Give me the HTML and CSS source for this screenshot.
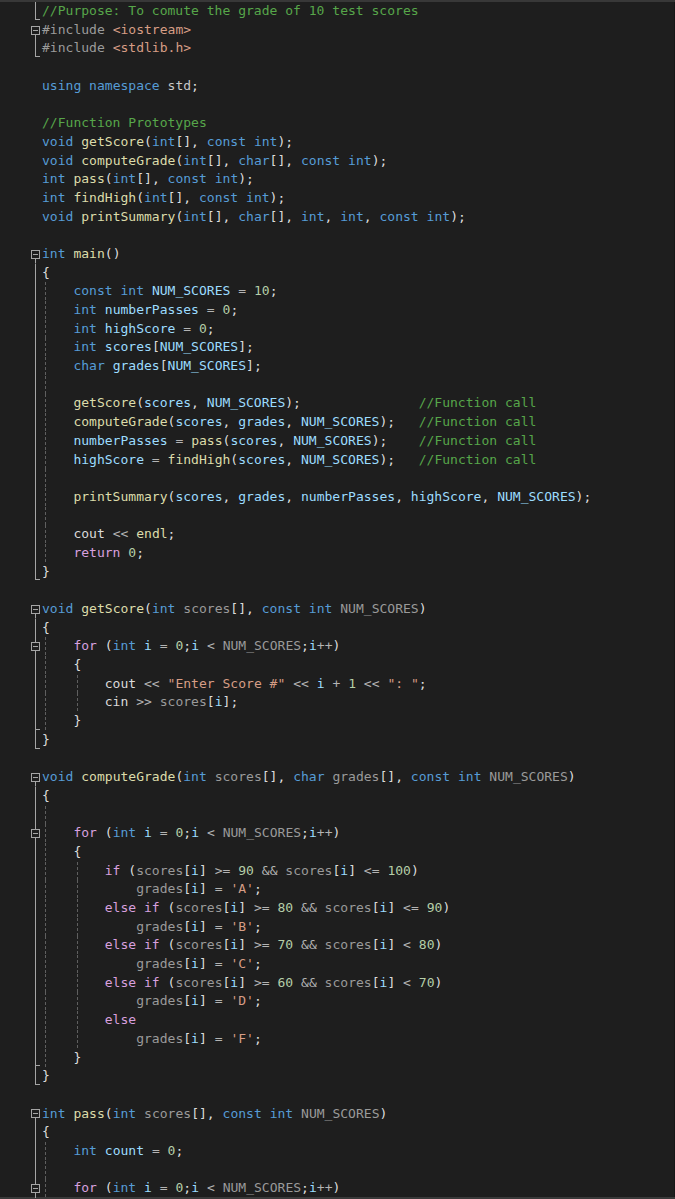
FILE: index.html
```html
<!DOCTYPE html>
<html>
<head>
<meta charset="utf-8">
<link rel="stylesheet" href="styles.css">
</head>
<body>
<div class="editor">
<div class="ln"><span class="g end"></span><span class="t"><span class="c">//Purpose: To comute the grade of 10 test scores</span></span></div>
<div class="ln"><span class="g box"></span><span class="t"><span class="pp">#include</span> <span class="s">&lt;iostream&gt;</span></span></div>
<div class="ln"><span class="g end"></span><span class="t"><span class="pp">#include</span> <span class="s">&lt;stdlib.h&gt;</span></span></div>
<div class="ln"><span class="g"></span><span class="t"></span></div>
<div class="ln"><span class="g"></span><span class="t"><span class="k">using</span> <span class="k">namespace</span> <span class="ns">std</span>;</span></div>
<div class="ln"><span class="g"></span><span class="t"></span></div>
<div class="ln"><span class="g"></span><span class="t"><span class="c">//Function Prototypes</span></span></div>
<div class="ln"><span class="g"></span><span class="t"><span class="k">void</span> <span class="f">getScore</span>(<span class="k">int</span>[], <span class="k">const</span> <span class="k">int</span>);</span></div>
<div class="ln"><span class="g"></span><span class="t"><span class="k">void</span> <span class="f">computeGrade</span>(<span class="k">int</span>[], <span class="k">char</span>[], <span class="k">const</span> <span class="k">int</span>);</span></div>
<div class="ln"><span class="g"></span><span class="t"><span class="k">int</span> <span class="f">pass</span>(<span class="k">int</span>[], <span class="k">const</span> <span class="k">int</span>);</span></div>
<div class="ln"><span class="g"></span><span class="t"><span class="k">int</span> <span class="f">findHigh</span>(<span class="k">int</span>[], <span class="k">const</span> <span class="k">int</span>);</span></div>
<div class="ln"><span class="g"></span><span class="t"><span class="k">void</span> <span class="f">printSummary</span>(<span class="k">int</span>[], <span class="k">char</span>[], <span class="k">int</span>, <span class="k">int</span>, <span class="k">const</span> <span class="k">int</span>);</span></div>
<div class="ln"><span class="g"></span><span class="t"></span></div>
<div class="ln"><span class="g box"></span><span class="t"><span class="k">int</span> <span class="f">main</span>()</span></div>
<div class="ln"><span class="g bar"></span><span class="t">{</span></div>
<div class="ln g1"><span class="g bar"></span><span class="t">    <span class="k">const</span> <span class="k">int</span> <span class="v">NUM_SCORES</span> <span class="o">=</span> <span class="n">10</span>;</span></div>
<div class="ln g1"><span class="g bar"></span><span class="t">    <span class="k">int</span> <span class="v">numberPasses</span> <span class="o">=</span> <span class="n">0</span>;</span></div>
<div class="ln g1"><span class="g bar"></span><span class="t">    <span class="k">int</span> <span class="v">highScore</span> <span class="o">=</span> <span class="n">0</span>;</span></div>
<div class="ln g1"><span class="g bar"></span><span class="t">    <span class="k">int</span> <span class="v">scores</span>[<span class="v">NUM_SCORES</span>];</span></div>
<div class="ln g1"><span class="g bar"></span><span class="t">    <span class="k">char</span> <span class="v">grades</span>[<span class="v">NUM_SCORES</span>];</span></div>
<div class="ln g1"><span class="g bar"></span><span class="t"></span></div>
<div class="ln g1"><span class="g bar"></span><span class="t">    <span class="f">getScore</span>(<span class="v">scores</span>, <span class="v">NUM_SCORES</span>);               <span class="c">//Function call</span></span></div>
<div class="ln g1"><span class="g bar"></span><span class="t">    <span class="f">computeGrade</span>(<span class="v">scores</span>, <span class="v">grades</span>, <span class="v">NUM_SCORES</span>);   <span class="c">//Function call</span></span></div>
<div class="ln g1"><span class="g bar"></span><span class="t">    <span class="v">numberPasses</span> <span class="o">=</span> <span class="f">pass</span>(<span class="v">scores</span>, <span class="v">NUM_SCORES</span>);    <span class="c">//Function call</span></span></div>
<div class="ln g1"><span class="g bar"></span><span class="t">    <span class="v">highScore</span> <span class="o">=</span> <span class="f">findHigh</span>(<span class="v">scores</span>, <span class="v">NUM_SCORES</span>);   <span class="c">//Function call</span></span></div>
<div class="ln g1"><span class="g bar"></span><span class="t"></span></div>
<div class="ln g1"><span class="g bar"></span><span class="t">    <span class="f">printSummary</span>(<span class="v">scores</span>, <span class="v">grades</span>, <span class="v">numberPasses</span>, <span class="v">highScore</span>, <span class="v">NUM_SCORES</span>);</span></div>
<div class="ln g1"><span class="g bar"></span><span class="t"></span></div>
<div class="ln g1"><span class="g bar"></span><span class="t">    <span class="gv">cout</span> <span class="o">&lt;&lt;</span> <span class="f">endl</span>;</span></div>
<div class="ln g1"><span class="g bar"></span><span class="t">    <span class="ck">return</span> <span class="n">0</span>;</span></div>
<div class="ln"><span class="g end"></span><span class="t">}</span></div>
<div class="ln"><span class="g"></span><span class="t"></span></div>
<div class="ln"><span class="g box"></span><span class="t"><span class="k">void</span> <span class="f">getScore</span>(<span class="k">int</span> <span class="p">scores</span>[], <span class="k">const</span> <span class="k">int</span> <span class="p">NUM_SCORES</span>)</span></div>
<div class="ln"><span class="g bar"></span><span class="t">{</span></div>
<div class="ln g1"><span class="g box boxin"></span><span class="t">    <span class="ck">for</span> (<span class="k">int</span> <span class="v">i</span> <span class="o">=</span> <span class="n">0</span>;<span class="v">i</span> <span class="o">&lt;</span> <span class="p">NUM_SCORES</span>;<span class="v">i</span><span class="o">++</span>)</span></div>
<div class="ln g1"><span class="g bar"></span><span class="t">    {</span></div>
<div class="ln g12"><span class="g bar"></span><span class="t">        <span class="gv">cout</span> <span class="o">&lt;&lt;</span> <span class="s">"Enter Score #"</span> <span class="o">&lt;&lt;</span> <span class="v">i</span> <span class="o">+</span> <span class="n">1</span> <span class="o">&lt;&lt;</span> <span class="s">": "</span>;</span></div>
<div class="ln g12"><span class="g bar"></span><span class="t">        <span class="gv">cin</span> <span class="o">&gt;&gt;</span> <span class="p">scores</span>[<span class="v">i</span>];</span></div>
<div class="ln g1"><span class="g end endin"></span><span class="t">    }</span></div>
<div class="ln"><span class="g end"></span><span class="t">}</span></div>
<div class="ln"><span class="g"></span><span class="t"></span></div>
<div class="ln"><span class="g box"></span><span class="t"><span class="k">void</span> <span class="f">computeGrade</span>(<span class="k">int</span> <span class="p">scores</span>[], <span class="k">char</span> <span class="p">grades</span>[], <span class="k">const</span> <span class="k">int</span> <span class="p">NUM_SCORES</span>)</span></div>
<div class="ln"><span class="g bar"></span><span class="t">{</span></div>
<div class="ln g1"><span class="g bar"></span><span class="t"></span></div>
<div class="ln g1"><span class="g box boxin"></span><span class="t">    <span class="ck">for</span> (<span class="k">int</span> <span class="v">i</span> <span class="o">=</span> <span class="n">0</span>;<span class="v">i</span> <span class="o">&lt;</span> <span class="p">NUM_SCORES</span>;<span class="v">i</span><span class="o">++</span>)</span></div>
<div class="ln g1"><span class="g bar"></span><span class="t">    {</span></div>
<div class="ln g12"><span class="g bar"></span><span class="t">        <span class="ck">if</span> (<span class="p">scores</span>[<span class="v">i</span>] <span class="o">&gt;=</span> <span class="n">90</span> <span class="o">&amp;&amp;</span> <span class="p">scores</span>[<span class="v">i</span>] <span class="o">&lt;=</span> <span class="n">100</span>)</span></div>
<div class="ln g12"><span class="g bar"></span><span class="t">            <span class="p">grades</span>[<span class="v">i</span>] <span class="o">=</span> <span class="s">'A'</span>;</span></div>
<div class="ln g12"><span class="g bar"></span><span class="t">        <span class="ck">else</span> <span class="ck">if</span> (<span class="p">scores</span>[<span class="v">i</span>] <span class="o">&gt;=</span> <span class="n">80</span> <span class="o">&amp;&amp;</span> <span class="p">scores</span>[<span class="v">i</span>] <span class="o">&lt;=</span> <span class="n">90</span>)</span></div>
<div class="ln g12"><span class="g bar"></span><span class="t">            <span class="p">grades</span>[<span class="v">i</span>] <span class="o">=</span> <span class="s">'B'</span>;</span></div>
<div class="ln g12"><span class="g bar"></span><span class="t">        <span class="ck">else</span> <span class="ck">if</span> (<span class="p">scores</span>[<span class="v">i</span>] <span class="o">&gt;=</span> <span class="n">70</span> <span class="o">&amp;&amp;</span> <span class="p">scores</span>[<span class="v">i</span>] <span class="o">&lt;</span> <span class="n">80</span>)</span></div>
<div class="ln g12"><span class="g bar"></span><span class="t">            <span class="p">grades</span>[<span class="v">i</span>] <span class="o">=</span> <span class="s">'C'</span>;</span></div>
<div class="ln g12"><span class="g bar"></span><span class="t">        <span class="ck">else</span> <span class="ck">if</span> (<span class="p">scores</span>[<span class="v">i</span>] <span class="o">&gt;=</span> <span class="n">60</span> <span class="o">&amp;&amp;</span> <span class="p">scores</span>[<span class="v">i</span>] <span class="o">&lt;</span> <span class="n">70</span>)</span></div>
<div class="ln g12"><span class="g bar"></span><span class="t">            <span class="p">grades</span>[<span class="v">i</span>] <span class="o">=</span> <span class="s">'D'</span>;</span></div>
<div class="ln g12"><span class="g bar"></span><span class="t">        <span class="ck">else</span></span></div>
<div class="ln g12"><span class="g bar"></span><span class="t">            <span class="p">grades</span>[<span class="v">i</span>] <span class="o">=</span> <span class="s">'F'</span>;</span></div>
<div class="ln g1"><span class="g end endin"></span><span class="t">    }</span></div>
<div class="ln"><span class="g end"></span><span class="t">}</span></div>
<div class="ln"><span class="g"></span><span class="t"></span></div>
<div class="ln"><span class="g box"></span><span class="t"><span class="k">int</span> <span class="f">pass</span>(<span class="k">int</span> <span class="p">scores</span>[], <span class="k">const</span> <span class="k">int</span> <span class="p">NUM_SCORES</span>)</span></div>
<div class="ln"><span class="g bar"></span><span class="t">{</span></div>
<div class="ln g1"><span class="g bar"></span><span class="t">    <span class="k">int</span> <span class="v">count</span> <span class="o">=</span> <span class="n">0</span>;</span></div>
<div class="ln g1"><span class="g bar"></span><span class="t"></span></div>
<div class="ln g1"><span class="g box boxin"></span><span class="t">    <span class="ck">for</span> (<span class="k">int</span> <span class="v">i</span> <span class="o">=</span> <span class="n">0</span>;<span class="v">i</span> <span class="o">&lt;</span> <span class="p">NUM_SCORES</span>;<span class="v">i</span><span class="o">++</span>)</span></div>
</div>
</body>
</html>
```

FILE: styles.css
```css
html, body {
  margin: 0;
  padding: 0;
  background: #1e1e1e;
}

.editor {
  height: 1199px;
  overflow: hidden;
  background: #1e1e1e;
  box-shadow: inset 0 2px 0 #383838, inset 0 -2px 0 #3a3a3a, inset -1px 0 0 #171717;
  padding-top: 2px;
  box-sizing: border-box;
  font-family: "DejaVu Sans Mono", "Liberation Mono", monospace;
  font-size: 13.04px;
  line-height: 18.7px;
  color: #dcdcdc;
}

.ln {
  display: flex;
  height: 18.7px;
}

.g1 {
  background: repeating-linear-gradient(to bottom, #5f5f5f 0 3px, transparent 3px 5px) 45px 0 / 1px 100% no-repeat;
}

.g12 {
  background:
    repeating-linear-gradient(to bottom, #5f5f5f 0 3px, transparent 3px 5px) 45px 0 / 1px 100% no-repeat,
    repeating-linear-gradient(to bottom, #5f5f5f 0 3px, transparent 3px 5px) 77px 0 / 1px 100% no-repeat;
}

.g {
  flex: none;
  width: 42px;
  height: 100%;
  display: flex;
  align-items: center;
}

.bar {
  background: linear-gradient(#a5a5a5, #a5a5a5) 35px 0 / 1px 100% no-repeat;
}

.end {
  background:
    linear-gradient(#a5a5a5, #a5a5a5) left 35px top 0 / 1px calc(100% - 1px) no-repeat,
    linear-gradient(#a5a5a5, #a5a5a5) left 35px bottom 1px / 5px 1px no-repeat;
}

.endin {
  background:
    linear-gradient(#a5a5a5, #a5a5a5) 35px 0 / 1px 100% no-repeat,
    linear-gradient(#a5a5a5, #a5a5a5) left 35px bottom 1px / 5px 1px no-repeat;
}

.box {
  background: linear-gradient(#a5a5a5, #a5a5a5) left 35px bottom 0 / 1px 50% no-repeat;
}

.boxin {
  background: linear-gradient(#a5a5a5, #a5a5a5) 35px 0 / 1px 100% no-repeat;
}

.box::before {
  content: "";
  display: block;
  margin-left: 31px;
  width: 9px;
  height: 9px;
  box-sizing: border-box;
  border: 1px solid #a5a5a5;
  background: #1e1e1e linear-gradient(#a5a5a5, #a5a5a5) center / 5px 1px no-repeat;
}

.t {
  white-space: pre;
}

.c { color: #57a64a; }
.k { color: #569cd6; }
.ck { color: #d8a0df; }
.f { color: #dcdcaa; }
.v { color: #9cdcfe; }
.p { color: #9a9a9a; }
.n { color: #b5cea8; }
.s { color: #d69d85; }
.pp { color: #9b9b9b; }
.o { color: #b4b4b4; }
.ns { color: #c8c8c8; }
.gv { color: #dadada; }
```
